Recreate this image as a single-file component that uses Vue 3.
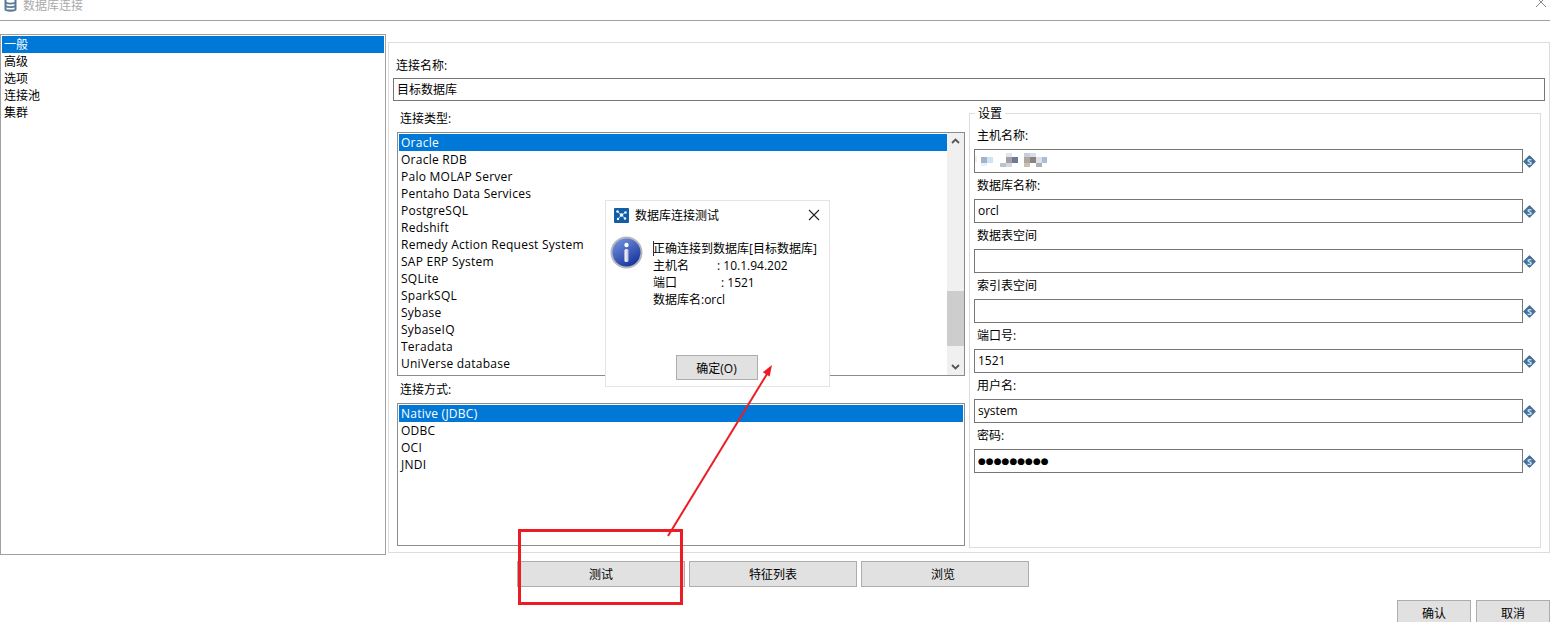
<script setup>
const navItems = ['一般', '高级', '选项', '连接池', '集群']
const dbTypes = [
  'Oracle', 'Oracle RDB', 'Palo MOLAP Server', 'Pentaho Data Services', 'PostgreSQL',
  'Redshift', 'Remedy Action Request System', 'SAP ERP System', 'SQLite', 'SparkSQL',
  'Sybase', 'SybaseIQ', 'Teradata', 'UniVerse database'
]
const accessTypes = ['Native (JDBC)', 'ODBC', 'OCI', 'JNDI']
const fields = [
  { label: '主机名称:', value: '', blurred: true },
  { label: '数据库名称:', value: 'orcl' },
  { label: '数据表空间', value: '' },
  { label: '索引表空间', value: '' },
  { label: '端口号:', value: '1521' },
  { label: '用户名:', value: 'system' },
  { label: '密码:', value: '●●●●●●●●●', password: true }
]
const blurBlocks = [
  [0, 6, 2, 6, '#eef0f2'], [6, 7, 6, 6, '#a4b3cc'], [12, 7, 6, 6, '#cfe3f4'], [6, 13, 6, 3, '#e6effa'],
  [31, 3, 6, 4, '#dde5f0'], [31, 7, 6, 6, '#a89e9e'], [37, 7, 6, 6, '#6c7a92'], [25, 13, 6, 4, '#b8c3d4'], [31, 13, 6, 4, '#d0d8e4'],
  [49, 3, 6, 4, '#c6cedc'], [55, 3, 6, 4, '#d8dde6'], [49, 7, 6, 6, '#b0a89c'], [55, 7, 6, 6, '#8a8088'], [61, 7, 6, 6, '#e0e0e4'],
  [67, 7, 5, 6, '#a8bcdc'], [49, 13, 6, 4, '#c8c0b4'], [61, 13, 6, 4, '#b0b0b4']
]
</script>

<template>
  <div class="page">
    <header class="titlebar">
      <div class="title">
        <svg class="db-icon" width="15" height="15" viewBox="0 0 15 15">
          <path d="M2.5 2.5C2.5 1 12.5 1 12.5 2.5V12.5C12.5 14 2.5 14 2.5 12.5Z" fill="#fff" stroke="#5b7a96" stroke-width="2" />
          <path d="M2.5 5.5C5 7 10 7 12.5 5.5M2.5 9C5 10.5 10 10.5 12.5 9" fill="none" stroke="#5b7a96" stroke-width="1.6" />
        </svg>
        <span>数据库连接</span>
      </div>
      <svg class="win-close" width="12" height="12" viewBox="0 0 12 12">
        <path d="M1 1L11 11M11 1L1 11" stroke="#8c8c8c" stroke-width="1" />
      </svg>
    </header>

    <main class="body">
      <ul class="nav-list">
        <li v-for="(item, i) in navItems" :key="item" :class="{ selected: i === 0 }">{{ item }}</li>
      </ul>

      <section class="panel">
        <div class="name-label">连接名称:</div>
        <div class="name-input">目标数据库</div>

        <div class="columns">
          <div class="lists">
            <div class="list-label">连接类型:</div>
            <div class="list-box types">
              <ul>
                <li v-for="(t, i) in dbTypes" :key="t" :class="{ selected: i === 0 }">{{ t }}</li>
              </ul>
              <div class="scrollbar">
                <svg width="17" height="17" viewBox="0 0 17 17"><path d="M5 10L8.5 6.5L12 10" fill="none" stroke="#555" stroke-width="1.8" /></svg>
                <div class="track"><div class="thumb"></div></div>
                <svg width="17" height="17" viewBox="0 0 17 17"><path d="M5 7L8.5 10.5L12 7" fill="none" stroke="#555" stroke-width="1.8" /></svg>
              </div>
            </div>
            <div class="list-label second">连接方式:</div>
            <div class="list-box access">
              <ul>
                <li v-for="(t, i) in accessTypes" :key="t" :class="{ selected: i === 0 }">{{ t }}</li>
              </ul>
            </div>
          </div>

          <fieldset class="settings">
            <legend>设置</legend>
            <div class="fields">
              <div v-for="f in fields" :key="f.label" class="field">
                <label>{{ f.label }}</label>
                <div class="field-row">
                  <div class="field-input" :class="{ password: f.password }">
                    <svg v-if="f.blurred" width="90" height="22" viewBox="0 0 90 22">
                      <rect v-for="(b, i) in blurBlocks" :key="i" :x="b[0]" :y="b[1]" :width="b[2]" :height="b[3]" :fill="b[4]" />
                    </svg>
                    <template v-else>{{ f.value }}</template>
                  </div>
                  <svg class="var-icon" width="13" height="13" viewBox="0 0 13 13">
                    <path d="M6.5 1L12 6.5L6.5 12L1 6.5Z" fill="#44709a" stroke="#44709a" stroke-width="1.4" stroke-linejoin="round" />
                    <text x="6.5" y="9.7" text-anchor="middle" class="var-s">S</text>
                  </svg>
                </div>
              </div>
            </div>
          </fieldset>
        </div>
      </section>
    </main>

    <div class="actions">
      <button>测试</button>
      <button>特征列表</button>
      <button class="browse">浏览</button>
    </div>

    <footer class="footer">
      <button>确认</button>
      <button>取消</button>
    </footer>

    <div class="dialog">
      <div class="dialog-head">
        <svg width="15" height="15" viewBox="0 0 15 15">
          <rect width="15" height="15" rx="1" fill="#0f5fa8" />
          <path d="M3.5 3.5L7.5 7L11.5 4.5M7.5 7L4 11M7.5 7L11 10.5" stroke="#fff" stroke-width="0.7" fill="none" />
          <circle cx="7.5" cy="7" r="1.8" fill="#fff" />
          <circle cx="3.5" cy="3.5" r="1.2" fill="#fff" />
          <circle cx="11.5" cy="4.5" r="1.2" fill="#fff" />
          <circle cx="4" cy="11" r="1.2" fill="#fff" />
          <circle cx="11" cy="10.5" r="1.2" fill="#fff" />
        </svg>
        <span class="dialog-title">数据库连接测试</span>
        <svg class="dialog-close" width="12" height="12" viewBox="0 0 12 12">
          <path d="M1 1L11 11M11 1L1 11" stroke="#222" stroke-width="1.1" />
        </svg>
      </div>
      <div class="dialog-body">
        <svg class="info-icon" width="33" height="33" viewBox="0 0 33 33">
          <defs>
            <linearGradient id="infoBlue" x1="0" y1="0" x2="0.6" y2="1">
              <stop offset="0" stop-color="#7f9de6" />
              <stop offset="1" stop-color="#17349c" />
            </linearGradient>
            <linearGradient id="infoStem" x1="0" y1="0" x2="1" y2="0">
              <stop offset="0" stop-color="#ffffff" />
              <stop offset="1" stop-color="#b9c0d0" />
            </linearGradient>
          </defs>
          <circle cx="16.5" cy="16.5" r="15" fill="url(#infoBlue)" stroke="#b4b8be" stroke-width="2" />
          <circle cx="16.5" cy="9" r="2.2" fill="#fff" />
          <rect x="14.5" y="13" width="4" height="13" rx="1.5" fill="url(#infoStem)" />
        </svg>
        <div class="dialog-text">
          <div class="caret-line"><span class="caret"></span>正确连接到数据库[目标数据库]</div>
          <div class="kv"><span class="k1">主机名</span>: 10.1.94.202</div>
          <div class="kv"><span class="k2">端口</span>: 1521</div>
          <div>数据库名:orcl</div>
        </div>
      </div>
      <div class="dialog-foot">
        <button>确定(O)</button>
      </div>
    </div>

    <svg class="arrow" width="120" height="182" viewBox="0 0 120 182">
      <path d="M1 180L100 18" stroke="#ed1c24" stroke-width="2" fill="none" />
      <path d="M105 9L102.6 20.5L95.8 16.3Z" fill="#ed1c24" />
    </svg>
    <div class="highlight"></div>
  </div>
</template>

<style>
html, body {
  margin: 0;
  background: #fff;
  overflow: hidden;
}
</style>

<style scoped>
.page {
  position: relative;
  width: 1550px;
  height: 622px;
  overflow: hidden;
  background: #fff;
  display: flex;
  flex-direction: column;
  font-family: "Open Sans", "Noto Sans CJK SC", sans-serif;
  font-size: 12px;
  color: #000;
}

ul {
  list-style: none;
  margin: 0;
  padding: 0;
}

li {
  height: 17px;
  line-height: 17px;
  padding-left: 2px;
  white-space: nowrap;
}

li.selected {
  background: #0078d7;
  color: #fff;
}

.titlebar {
  height: 20px;
  flex: none;
  border-bottom: 1px solid #a0a0a0;
  display: flex;
  justify-content: space-between;
  align-items: flex-start;
  overflow: hidden;
}

.title {
  display: flex;
  align-items: center;
  gap: 5px;
  margin: -4px 0 0 3px;
  height: 17px;
  color: #aaa;
}

.win-close {
  margin: -4px 3px 0 0;
}

.body {
  display: flex;
  height: 521px;
  margin-top: 13px;
  flex: none;
}

.nav-list {
  width: 382px;
  height: 517px;
  padding: 1px;
  border: 1px solid #a0a0a0;
  flex: none;
  margin-right: 2px;
}

.panel {
  flex: 1;
  height: 511px;
  margin-top: 8px;
  border: 1px solid #ddd;
  box-sizing: border-box;
  padding: 12px 4px 0 4px;
}

.name-label {
  height: 17px;
  line-height: 17px;
  margin: 2px 0 4px 3px;
}

.name-input {
  height: 21px;
  line-height: 21px;
  border: 1px solid #767676;
  padding-left: 3px;
}

.columns {
  display: flex;
  margin-top: 2px;
  gap: 4px;
}

.lists {
  width: 568px;
  margin-left: 4px;
  margin-top: -2px;
  flex: none;
}

.list-label {
  height: 17px;
  line-height: 17px;
  margin: 9px 0 5px 3px;
}

.list-label.second {
  margin: 5px 0 5px 3px;
}

.list-box {
  border: 1px solid #8c8c8c;
  box-sizing: border-box;
  padding: 1px;
  letter-spacing: 0.25px;
}

.types {
  height: 244px;
  display: flex;
}

.types ul {
  flex: 1;
}

.access {
  height: 143px;
}

.scrollbar {
  width: 17px;
  margin: -1px -1px -1px 0;
  background: #f0f0f0;
  display: flex;
  flex-direction: column;
  flex: none;
}

.track {
  flex: 1;
  display: flex;
  flex-direction: column;
  justify-content: flex-end;
  padding-bottom: 12px;
}

.thumb {
  height: 55px;
  background: #cdcdcd;
}

.settings {
  margin: 2px 0 0 0;
  padding: 0 0 0 4px;
  width: 572px;
  height: 443px;
  box-sizing: border-box;
  border: 1px solid #ddd;
  min-width: 0;
}

legend {
  margin-left: 1px;
  padding: 0 3px;
  line-height: 17px;
  font-size: 12px;
}

.fields {
  padding-top: 1px;
}

.field {
  height: 50px;
  padding-top: 4px;
  box-sizing: border-box;
}

.field label {
  display: block;
  height: 17px;
  line-height: 17px;
  margin: 0 0 5px 3px;
}

.field-row {
  display: flex;
  align-items: center;
}

.field-input {
  width: 544px;
  height: 22px;
  line-height: 22px;
  border: 1px solid #767676;
  padding-left: 3px;
  overflow: hidden;
}

.field-input svg {
  display: block;
  margin-left: -3px;
}

.field-input.password {
  font-family: "DejaVu Sans", sans-serif;
  font-size: 9px;
}

.var-icon {
  flex: none;
}

.var-s {
  font-size: 9px;
  font-weight: 700;
  fill: #d5e4f0;
}

.actions {
  display: flex;
  gap: 4px;
  height: 26px;
  margin: 6px 0 0 517px;
  flex: none;
}

button {
  font: inherit;
  color: #000;
  background: #e1e1e1;
  border: 1px solid #adadad;
  padding: 0;
  box-sizing: border-box;
}

.actions button {
  width: 168px;
  height: 26px;
}

.actions .browse {
  padding-right: 4px;
}

.footer {
  display: flex;
  justify-content: flex-end;
  gap: 5px;
  margin-top: 13px;
  flex: none;
}

.footer button {
  width: 74px;
  height: 26px;
}

.dialog {
  position: absolute;
  left: 605px;
  top: 200px;
  width: 225px;
  height: 187px;
  box-sizing: border-box;
  background: #fff;
  border: 1px solid #e4e4e4;
  display: flex;
  flex-direction: column;
}

.dialog-head {
  display: flex;
  align-items: center;
  height: 28px;
  padding: 0 9px 0 8px;
}

.dialog-title {
  margin-left: 6px;
  flex: 1;
}

.dialog-body {
  display: flex;
  flex: 1;
  padding: 7px 0 0 4px;
}

.info-icon {
  flex: none;
}

.dialog-text {
  margin-left: 10px;
  margin-top: 4px;
  line-height: 17px;
}

.caret-line {
  position: relative;
}

.caret {
  position: absolute;
  left: 0;
  top: 1px;
  width: 1px;
  height: 15px;
  background: #333;
}

.kv {
  display: flex;
}

.k1 {
  width: 64px;
}

.k2 {
  width: 68px;
}

.dialog-foot {
  display: flex;
  justify-content: center;
  padding: 0 2px 6px 0;
}

.dialog-foot button {
  width: 82px;
  height: 25px;
}

.arrow {
  position: absolute;
  left: 667px;
  top: 356px;
}

.highlight {
  position: absolute;
  left: 518px;
  top: 529px;
  width: 165px;
  height: 76px;
  box-sizing: border-box;
  border: 3px solid #ed1c24;
}
</style>
